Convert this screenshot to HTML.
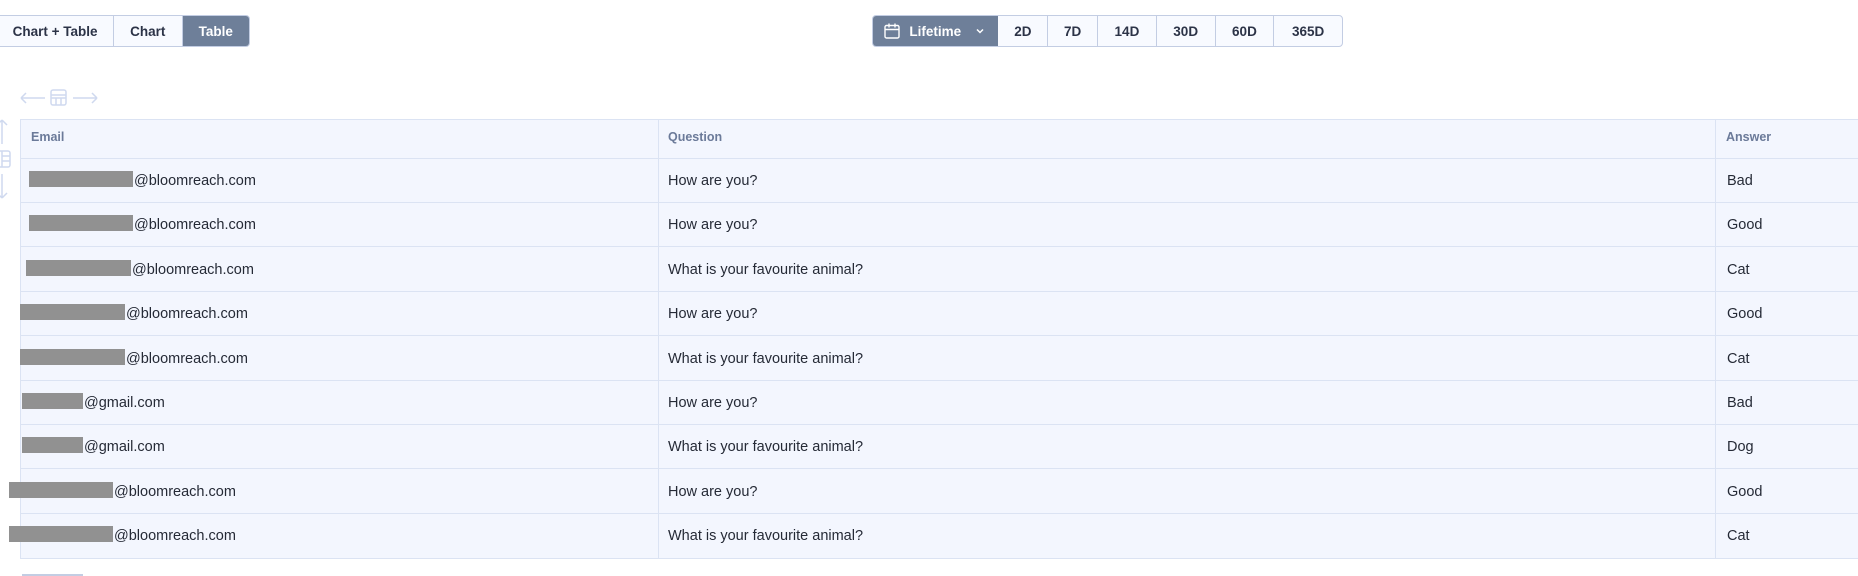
<!DOCTYPE html>
<html><head><meta charset="utf-8"><style>
*{box-sizing:border-box;margin:0;padding:0}
body{width:1858px;height:576px;overflow:hidden;background:#fff;font-family:"Liberation Sans",sans-serif;position:relative}
.grp{position:absolute;top:15px;height:32px;display:flex;border:1px solid #c3cde3;border-radius:4px;overflow:hidden;background:#f8faff}
.grp div{display:flex;align-items:center;justify-content:center;font-size:13.5px;font-weight:700;color:#2c3347;border-right:1px solid #c3cde3;height:100%}
.grp div:last-child{border-right:none}
.grp .on{background:#6e7f99;color:#fff;border-color:#6e7f99}
.tbl{position:absolute;left:20px;top:119px;width:1900px;height:440px;background:#f3f6fe;border:1px solid #dbe3f3}
.row{position:absolute;left:0;width:100%;border-bottom:1px solid #dbe3f3}
.vl{position:absolute;top:0;height:100%;width:1px;background:#dbe3f3}
.c{position:absolute;font-size:14.5px;color:#252a36;white-space:nowrap}
.h{position:absolute;font-size:12.5px;font-weight:700;color:#6b7a99}
.r{position:absolute;background:#919191;height:16px}
</style></head><body>
<div class="grp" style="left:-4px;width:254px;border-radius:0 4px 4px 0">
<div style="width:118px">Chart + Table</div><div style="width:69px">Chart</div><div class="on" style="width:67px">Table</div></div>
<div class="grp" style="left:872px;width:471px">
<div class="on" style="width:126px;gap:8px"><svg width="18" height="18" viewBox="0 0 18 18" fill="none" stroke="#fff" stroke-width="1.4"><rect x="2" y="3.5" width="14" height="12.5" rx="1.5"/><path d="M2 7.5h14M6 1.5v4M12 1.5v4"/></svg>Lifetime<svg width="14" height="14" viewBox="0 0 14 14" fill="none" stroke="#fff" stroke-width="1.5" style="margin-left:4px"><path d="M4 5.5l3 3 3-3"/></svg></div>
<div style="width:50px">2D</div><div style="width:50px">7D</div><div style="width:59px">14D</div><div style="width:59px">30D</div><div style="width:59px">60D</div><div style="width:68px">365D</div></div>
<svg style="position:absolute;left:18px;top:88px" width="82" height="20" viewBox="0 0 82 20" fill="none" stroke="#cfd9ef" stroke-width="1.5"><path d="M3 10h24M3 10l5-5M3 10l5 5M55 10h24M79 10l-5-5M79 10l-5 5"/><rect x="33" y="2" width="15" height="15" rx="2"/><path d="M33 7h15M33 10h15M38 10v7M43 10v7"/></svg>
<svg style="position:absolute;left:-2px;top:118px" width="16" height="82" viewBox="0 0 16 82" fill="none" stroke="#cfd9ef" stroke-width="1.5"><path d="M4 2v24M4 2l-5 5M4 2l5 5M4 56v24M4 80l-5-5M4 80l5-5"/><rect x="-2" y="33" width="14" height="16" rx="2"/><path d="M4 33v16M4 38h8M4 43h8"/></svg>
<div class="tbl">
<div class="row" style="top:0;height:39px"></div>
<div class="vl" style="left:637px"></div><div class="vl" style="left:1694px"></div>
<div class="h" style="left:10px;top:10px">Email</div><div class="h" style="left:647px;top:10px">Question</div><div class="h" style="left:1705px;top:10px">Answer</div>
</div>
<div id="rows"></div>
<script>
var d=[[29,133,"@bloomreach.com","How are you?","Bad"],[29,133,"@bloomreach.com","How are you?","Good"],[26,131,"@bloomreach.com","What is your favourite animal?","Cat"],[20,125,"@bloomreach.com","How are you?","Good"],[20,125,"@bloomreach.com","What is your favourite animal?","Cat"],[22,83,"@gmail.com","How are you?","Bad"],[22,83,"@gmail.com","What is your favourite animal?","Dog"],[9,113,"@bloomreach.com","How are you?","Good"],[9,113,"@bloomreach.com","What is your favourite animal?","Cat"]];
var h="";d.forEach(function(r,i){var top=158+i*44.4;var y=top+22;
if(i<8)h+='<div style="position:absolute;left:20px;width:1900px;top:'+(top+44)+'px;height:1px;background:#dbe3f3"></div>';
h+='<div class="c" style="left:'+(r[1]+1)+'px;top:'+(y-7)+'px">'+r[2]+'</div><div class="r" style="left:'+r[0]+'px;width:'+(r[1]-r[0])+'px;top:'+(y-9)+'px"></div><div class="c" style="left:668px;top:'+(y-7)+'px">'+r[3]+'</div><div class="c" style="left:1727px;top:'+(y-7)+'px">'+r[4]+'</div>';});
document.getElementById("rows").innerHTML=h;
</script>
<div style="position:absolute;left:22px;top:574px;width:61px;height:2px;background:#c3cde3"></div>
</body></html>
